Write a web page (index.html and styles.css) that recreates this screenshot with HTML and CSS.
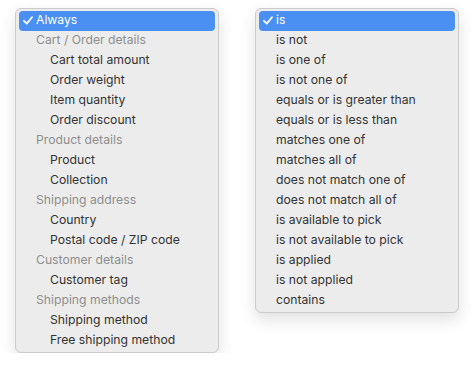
FILE: index.html
```html
<!DOCTYPE html>
<html>
<head>
    <meta charset="UTF-8">
    <title>Condition menus</title>
    <link rel="stylesheet" href="styles.css">
</head>
<body>

<div class="page">
    <!-- Condition subject menu -->
    <div class="menu">
        <div class="item selected">
            <svg class="check" width="10" height="9" viewBox="0 0 10 9"><polyline points="1,4.8 3.8,7.6 9,1.2" /></svg>
            Always
        </div>
        <div class="item group">Cart / Order details</div>
        <div class="item sub">Cart total amount</div>
        <div class="item sub">Order weight</div>
        <div class="item sub">Item quantity</div>
        <div class="item sub">Order discount</div>
        <div class="item group">Product details</div>
        <div class="item sub">Product</div>
        <div class="item sub">Collection</div>
        <div class="item group">Shipping address</div>
        <div class="item sub">Country</div>
        <div class="item sub">Postal code / ZIP code</div>
        <div class="item group">Customer details</div>
        <div class="item sub">Customer tag</div>
        <div class="item group">Shipping methods</div>
        <div class="item sub">Shipping method</div>
        <div class="item sub">Free shipping method</div>
    </div>

    <!-- Operator menu -->
    <div class="menu">
        <div class="item selected">
            <svg class="check" width="10" height="9" viewBox="0 0 10 9"><polyline points="1,4.8 3.8,7.6 9,1.2" /></svg>
            is
        </div>
        <div class="item">is not</div>
        <div class="item">is one of</div>
        <div class="item">is not one of</div>
        <div class="item">equals or is greater than</div>
        <div class="item">equals or is less than</div>
        <div class="item">matches one of</div>
        <div class="item">matches all of</div>
        <div class="item">does not match one of</div>
        <div class="item">does not match all of</div>
        <div class="item">is available to pick</div>
        <div class="item">is not available to pick</div>
        <div class="item">is applied</div>
        <div class="item">is not applied</div>
        <div class="item">contains</div>
    </div>
</div>

</body>
</html>
```

FILE: styles.css
```css
body {
    margin: 0;
    padding: 0;
    background-color: #ffffff;
    font-family: Inter, "Liberation Sans", sans-serif;
}

.page {
    display: flex;
    align-items: flex-start;
    gap: 36px;
    padding: 8px 0 0 15px;
}

/* Menu box */
.menu {
    width: 204px;
    box-sizing: border-box;
    background-color: #ececec;
    border: 1px solid #cbcbcb;
    border-radius: 6px;
    padding: 2px 3px 1px 3px;
    box-shadow: 0 7px 16px rgba(0, 0, 0, 0.12);
}

.item {
    position: relative;
    height: 20px;
    line-height: 18px;
    padding-left: 17px;
    font-size: 12.2px;
    color: #333333;
    border-radius: 4px;
    white-space: nowrap;
}

.item.group {
    color: #8e8e8e;
}

.item.sub {
    padding-left: 31px;
}

.item.selected {
    background-color: #4a90f3;
    color: #ffffff;
}

.check {
    position: absolute;
    left: 4px;
    top: 5px;
}

.check polyline {
    fill: none;
    stroke: #ffffff;
    stroke-width: 1.8;
    stroke-linecap: round;
    stroke-linejoin: round;
}
```
